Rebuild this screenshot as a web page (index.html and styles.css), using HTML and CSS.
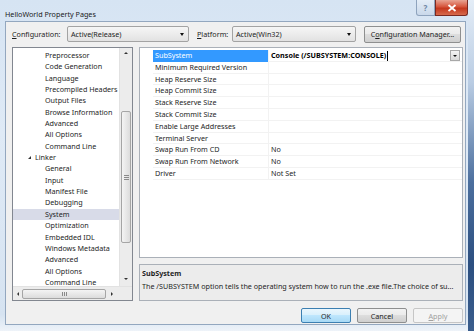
FILE: index.html
```html
<!DOCTYPE html>
<html lang="en">
<head>
    <meta charset="UTF-8">
    <title>HelloWorld Property Pages</title>
    <link rel="stylesheet" href="styles.css">
</head>
<body>
<div class="window">
    <div class="titlebar">
        <span class="title">HelloWorld Property Pages</span>
        <div class="caption-buttons">
            <span class="cap-help">?</span>
            <span class="cap-close">
                <svg width="10" height="8" viewBox="0 0 10 8"><path d="M1.5 1 L8.5 7 M8.5 1 L1.5 7" stroke="#fff" stroke-width="1.8"/></svg>
            </span>
        </div>
    </div>

    <div class="client">
        <div class="toolbar">
            <label class="lbl"><u>C</u>onfiguration:</label>
            <div class="combo combo-config"><span>Active(Release)</span><i class="arrow"></i></div>
            <label class="lbl lbl-platform"><u>P</u>latform:</label>
            <div class="combo combo-platform"><span>Active(Win32)</span><i class="arrow"></i></div>
            <button class="btn btn-manager">C<u>o</u>nfiguration Manager...</button>
        </div>

        <div class="main">
            <div class="tree">
                <div class="tree-body">
                    <ul class="tree-list">
                        <li class="child">Preprocessor</li>
                        <li class="child">Code Generation</li>
                        <li class="child">Language</li>
                        <li class="child">Precompiled Headers</li>
                        <li class="child">Output Files</li>
                        <li class="child">Browse Information</li>
                        <li class="child">Advanced</li>
                        <li class="child">All Options</li>
                        <li class="child">Command Line</li>
                        <li class="node"><i class="expander"></i>Linker</li>
                        <li class="child">General</li>
                        <li class="child">Input</li>
                        <li class="child">Manifest File</li>
                        <li class="child">Debugging</li>
                        <li class="child selected">System</li>
                        <li class="child">Optimization</li>
                        <li class="child">Embedded IDL</li>
                        <li class="child">Windows Metadata</li>
                        <li class="child">Advanced</li>
                        <li class="child">All Options</li>
                        <li class="child">Command Line</li>
                    </ul>
                    <div class="vscroll">
                        <span class="sb-arrow up"></span>
                        <div class="vtrack">
                            <div class="vthumb"><span class="grip-h"></span></div>
                        </div>
                        <span class="sb-arrow down"></span>
                    </div>
                </div>
                <div class="hscroll">
                    <span class="sb-arrow left"></span>
                    <div class="hthumb"><span class="grip-v"></span></div>
                    <span class="sb-arrow right"></span>
                    <span class="corner"></span>
                </div>
            </div>

            <div class="right">
                <div class="grid">
                    <div class="prop selected">
                        <span class="name">SubSystem</span>
                        <span class="value editing">Console (/SUBSYSTEM:CONSOLE)<i class="caret"></i><b class="drop"><i class="arrow"></i></b></span>
                    </div>
                    <div class="prop"><span class="name">Minimum Required Version</span><span class="value"></span></div>
                    <div class="prop"><span class="name">Heap Reserve Size</span><span class="value"></span></div>
                    <div class="prop"><span class="name">Heap Commit Size</span><span class="value"></span></div>
                    <div class="prop"><span class="name">Stack Reserve Size</span><span class="value"></span></div>
                    <div class="prop"><span class="name">Stack Commit Size</span><span class="value"></span></div>
                    <div class="prop"><span class="name">Enable Large Addresses</span><span class="value"></span></div>
                    <div class="prop"><span class="name">Terminal Server</span><span class="value"></span></div>
                    <div class="prop"><span class="name">Swap Run From CD</span><span class="value">No</span></div>
                    <div class="prop"><span class="name">Swap Run From Network</span><span class="value">No</span></div>
                    <div class="prop"><span class="name">Driver</span><span class="value">Not Set</span></div>
                </div>
                <div class="desc">
                    <div class="desc-title">SubSystem</div>
                    <div class="desc-text">The /SUBSYSTEM option tells the operating system how to run the .exe file.The choice of su...</div>
                </div>
            </div>
        </div>

        <div class="buttons">
            <button class="btn btn-ok">OK</button>
            <button class="btn">Cancel</button>
            <button class="btn disabled"><u>A</u>pply</button>
        </div>
    </div>
</div>
</body>
</html>
```

FILE: styles.css
```css
body {
    margin: 0;
    width: 474px;
    height: 331px;
    overflow: hidden;
    background: linear-gradient(to bottom, #e4edf7 0%, #b9cce3 25%, #4c6f9e 55%, #2c4f80 80%, #3a5d8c 100%);
    font-family: "Noto Sans", "Open Sans", sans-serif;
    font-size: 7.2px;
    color: #1e1e1e;
}
.window {
    width: 468px;
    height: 331px;
    background: linear-gradient(to bottom, #d6e4f3 0%, #dfeaf6 40%, #d6e3f1 95%, #eef3f9 100%);
    position: relative;
}
.titlebar {
    height: 21px;
    display: flex;
    align-items: flex-start;
    justify-content: space-between;
}
.title {
    padding: 9px 0 0 5px;
    color: #1a1a1a;
}
.caption-buttons {
    display: flex;
}
.cap-help {
    width: 17px;
    height: 15px;
    border: 1px solid #8ea3bd;
    border-top: none;
    border-radius: 0 0 0 3px;
    background: linear-gradient(to bottom, #e4edf7, #c9d8ea);
    color: #6f87a3;
    text-align: center;
    line-height: 15px;
    font-size: 8px;
    font-weight: bold;
}
.cap-close {
    width: 31px;
    height: 15px;
    border: 1px solid #7a2a22;
    border-top: none;
    border-radius: 0 0 3px 0;
    background: linear-gradient(to bottom, #e8a493 0%, #d6553c 45%, #c5381e 55%, #d66a4d 100%);
    display: flex;
    align-items: center;
    justify-content: center;
}
.client {
    position: absolute;
    left: 5px;
    top: 21px;
    width: 461px;
    height: 304px;
    box-sizing: border-box;
    background: #f0f0f0;
    border: 1px solid #93a7bf;
    padding: 3px 2px 0 6px;
    display: flex;
    flex-direction: column;
}
.toolbar {
    display: flex;
    align-items: center;
    height: 18px;
}
.lbl {
    width: 55px;
}
.lbl-platform {
    width: 35px;
    margin-left: 8px;
}
.combo {
    height: 16px;
    box-sizing: border-box;
    border: 1px solid #a3a3a3;
    border-radius: 2px;
    background: linear-gradient(to bottom, #f6f6f6, #e2e2e2);
    display: flex;
    align-items: center;
    justify-content: space-between;
    padding: 0 4px 0 3px;
}
.combo-config { width: 122px; }
.combo-platform { width: 124px; }
.arrow {
    width: 0;
    height: 0;
    border-left: 2.5px solid transparent;
    border-right: 2.5px solid transparent;
    border-top: 3px solid #111;
}
.btn {
    font-family: inherit;
    font-size: inherit;
    color: #1e1e1e;
    height: 17px;
    padding: 0;
    border: 1px solid #8e8f8f;
    border-radius: 2px;
    background: linear-gradient(to bottom, #f2f2f2 0%, #ebebeb 45%, #dddddd 50%, #cfcfcf 100%);
}
.btn-manager {
    width: 97px;
    margin-left: 8px;
}
.main {
    display: flex;
    margin-top: 4px;
    height: 254px;
}
.tree {
    width: 121px;
    box-sizing: border-box;
    border: 1px solid #828790;
    background: #fff;
    display: flex;
    flex-direction: column;
}
.tree-body {
    flex: 1;
    display: flex;
    overflow: hidden;
}
.tree-list {
    list-style: none;
    margin: 0;
    padding: 2px 0 0 0;
    flex: 1;
}
.tree-list li {
    height: 11.35px;
    line-height: 11.35px;
    white-space: nowrap;
}
.tree-list .child { padding-left: 32px; }
.tree-list .node {
    padding-left: 15px;
    display: flex;
    align-items: center;
}
.tree-list .selected { background: #d8dbe8; }
.expander {
    width: 0;
    height: 0;
    border-left: 3px solid transparent;
    border-bottom: 3px solid #333;
    margin-right: 4px;
}
.vscroll {
    width: 12px;
    background: #ececec;
    border-left: 1px solid #e2e2e2;
    display: flex;
    flex-direction: column;
    align-items: center;
}
.sb-arrow {
    display: block;
    width: 0;
    height: 0;
    flex: none;
}
.sb-arrow.up {
    margin: 4px 0 3px;
    border-left: 2px solid transparent;
    border-right: 2px solid transparent;
    border-bottom: 2.5px solid #333;
}
.sb-arrow.down {
    margin: 3px 0 6px;
    border-left: 2px solid transparent;
    border-right: 2px solid transparent;
    border-top: 2.5px solid #333;
}
.vtrack {
    flex: 1;
    width: 100%;
    padding-top: 54px;
    box-sizing: border-box;
}
.vthumb {
    margin: 0 1px;
    height: 130px;
    border: 1px solid #a5a5a5;
    border-radius: 2px;
    background: linear-gradient(to right, #f4f4f4, #dcdcdc);
    display: flex;
    align-items: center;
    justify-content: center;
}
.grip-h {
    width: 5px;
    height: 5px;
    background: repeating-linear-gradient(to bottom, #8a8a8a 0, #8a8a8a 1px, transparent 1px, transparent 2px);
}
.hscroll {
    height: 13px;
    background: #ececec;
    display: flex;
    align-items: center;
    border-top: 1px solid #e2e2e2;
}
.sb-arrow.left {
    margin: 0 3px 0 4px;
    border-top: 2px solid transparent;
    border-bottom: 2px solid transparent;
    border-right: 2.5px solid #333;
}
.sb-arrow.right {
    margin: 0 4px 0 5px;
    border-top: 2px solid transparent;
    border-bottom: 2px solid transparent;
    border-left: 2.5px solid #333;
}
.hthumb {
    width: 84px;
    height: 10px;
    box-sizing: border-box;
    border: 1px solid #a5a5a5;
    border-radius: 2px;
    background: linear-gradient(to bottom, #f4f4f4, #dcdcdc);
    display: flex;
    align-items: center;
    justify-content: center;
}
.grip-v {
    width: 5px;
    height: 4px;
    background: repeating-linear-gradient(to right, #8a8a8a 0, #8a8a8a 1px, transparent 1px, transparent 2px);
}
.corner {
    margin-left: auto;
    width: 12px;
    height: 13px;
    background: #ececec;
}
.right {
    flex: 1;
    margin-left: 6px;
    display: flex;
    flex-direction: column;
}
.grid {
    height: 211px;
    box-sizing: border-box;
    border: 1px solid #aab0b8;
    background: #fff;
    padding: 2px 0 0 13px;
}
.prop {
    display: flex;
    height: 11.8px;
    line-height: 11.8px;
    box-shadow: inset 0 -1px 0 #f2f2f2;
}
.prop .name {
    width: 115px;
    padding-left: 2px;
    box-sizing: border-box;
    white-space: nowrap;
}
.prop .value {
    flex: 1;
    padding-left: 2px;
    border-left: 1px solid #f2f2f2;
    white-space: nowrap;
}
.prop.selected .name {
    background: #3399ff;
    color: #fff;
}
.value.editing {
    font-weight: bold;
    color: #000;
    display: flex;
    align-items: center;
    padding-right: 2px;
}
.caret {
    width: 1px;
    height: 10px;
    background: #000;
    margin-left: 1px;
}
.drop {
    margin-left: auto;
    width: 8px;
    height: 9px;
    border: 1px solid #a8a8a8;
    background: linear-gradient(to bottom, #f4f4f4, #d8d8d8);
    display: flex;
    align-items: center;
    justify-content: center;
}
.drop .arrow {
    border-left-width: 2px;
    border-right-width: 2px;
    border-top-width: 2.5px;
}
.desc {
    margin-top: 6px;
    flex: 1;
    box-sizing: border-box;
    border: 1px solid #aab0b8;
    background: #ececec;
    padding: 2px 2px 0 2px;
    line-height: 13px;
    white-space: nowrap;
}
.desc-title { font-weight: bold; }
.buttons {
    display: flex;
    justify-content: flex-end;
    gap: 6px;
    margin-top: 7px;
}
.buttons .btn {
    width: 50px;
    height: 15px;
}
.btn-ok {
    border-color: #3c7fb1;
    background: linear-gradient(to bottom, #eaf6fd 0%, #d9f0fc 45%, #bee6fd 50%, #a7d9f5 100%);
}
.btn.disabled {
    color: #a0a0a0;
    border-color: #c6c6c6;
    background: #f4f4f4;
}
```
